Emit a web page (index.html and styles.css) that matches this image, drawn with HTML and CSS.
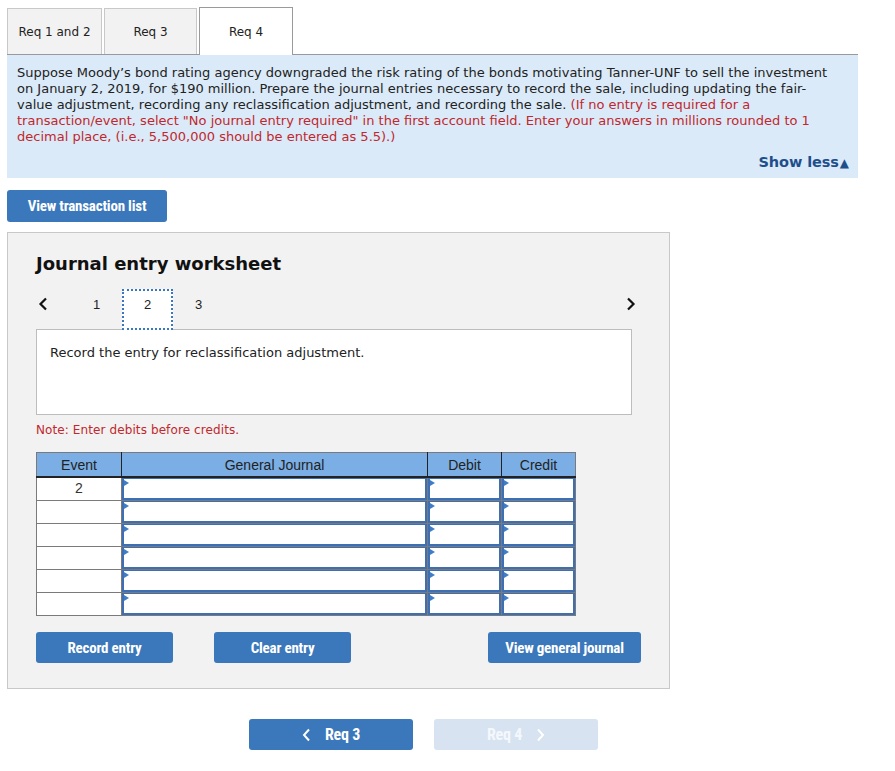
FILE: index.html
```html
<!DOCTYPE html>
<html lang="en">
<head>
<meta charset="utf-8">
<title>Journal entry worksheet</title>
<link rel="stylesheet" href="styles.css">
</head>
<body>
<div class="page">
  <div class="tabs">
    <div class="tab">Req 1 and 2</div>
    <div class="tab">Req 3</div>
    <div class="tab active">Req 4</div>
  </div>
  <div class="question">
    <p class="qtext">Suppose Moody’s bond rating agency downgraded the risk rating of the bonds motivating Tanner-UNF to sell the investment on January 2, 2019, for $190 million. Prepare the journal entries necessary to record the sale, including updating the fair-value adjustment, recording any reclassification adjustment, and recording the sale. <span class="red">(If no entry is required for a transaction/event, select "No journal entry required" in the first account field. Enter your answers in millions rounded to 1 decimal place, (i.e., 5,500,000 should be entered as 5.5).)</span></p>
    <div class="showless">Show less<span class="tri">▲</span></div>
  </div>

  <button class="btn btn-list">View transaction list</button>

  <div class="worksheet">
    <h2 class="ws-title">Journal entry worksheet</h2>
    <div class="pager">
      <span class="chev chev-left"><svg width="10" height="14" viewBox="0 0 10 14"><polyline points="8,1.5 2.5,7 8,12.5" fill="none" stroke="#111" stroke-width="2.2"/></svg></span>
      <span class="pg">1</span>
      <span class="pg current">2</span>
      <span class="pg">3</span>
      <span class="chev chev-right"><svg width="10" height="14" viewBox="0 0 10 14"><polyline points="2,1.5 7.5,7 2,12.5" fill="none" stroke="#111" stroke-width="2.2"/></svg></span>
    </div>
    <div class="prompt">Record the entry for reclassification adjustment.</div>
    <div class="note">Note: Enter debits before credits.</div>

    <table class="journal">
      <colgroup>
        <col class="c-event">
        <col class="c-gj">
        <col class="c-amt">
        <col class="c-amt">
      </colgroup>
      <thead>
        <tr>
          <th>Event</th>
          <th>General Journal</th>
          <th>Debit</th>
          <th>Credit</th>
        </tr>
      </thead>
      <tbody>
        <tr><td class="ev">2</td><td class="in"><div class="field"></div></td><td class="in"><div class="field"></div></td><td class="in"><div class="field"></div></td></tr>
        <tr><td class="ev"></td><td class="in"><div class="field"></div></td><td class="in"><div class="field"></div></td><td class="in"><div class="field"></div></td></tr>
        <tr><td class="ev"></td><td class="in"><div class="field"></div></td><td class="in"><div class="field"></div></td><td class="in"><div class="field"></div></td></tr>
        <tr><td class="ev"></td><td class="in"><div class="field"></div></td><td class="in"><div class="field"></div></td><td class="in"><div class="field"></div></td></tr>
        <tr><td class="ev"></td><td class="in"><div class="field"></div></td><td class="in"><div class="field"></div></td><td class="in"><div class="field"></div></td></tr>
        <tr><td class="ev"></td><td class="in"><div class="field"></div></td><td class="in"><div class="field"></div></td><td class="in"><div class="field"></div></td></tr>
      </tbody>
    </table>

    <div class="actions">
      <button class="btn btn-record">Record entry</button>
      <button class="btn btn-clear">Clear entry</button>
      <button class="btn btn-view">View general journal</button>
    </div>
  </div>

  <div class="bottom-nav">
    <button class="btn btn-nav"><svg width="9" height="14" viewBox="0 0 9 14"><polyline points="7,1.5 2,7 7,12.5" fill="none" stroke="#fff" stroke-width="2"/></svg><span>Req 3</span></button>
    <button class="btn btn-nav disabled"><span>Req 4</span><svg width="9" height="14" viewBox="0 0 9 14"><polyline points="2,1.5 7,7 2,12.5" fill="none" stroke="#fff" stroke-width="2"/></svg></button>
  </div>
</div>
</body>
</html>
```

FILE: styles.css
```css
html, body {
  margin: 0;
  padding: 0;
  background: #fff;
}
body {
  font-family: "DejaVu Sans", Verdana, sans-serif;
  color: #222;
}
.page {
  padding: 7px 0 0 7px;
  width: 851px;
}

/* tabs */
.tabs {
  display: flex;
  gap: 2px;
  border-bottom: 1px solid #9a9a9a;
  height: 47px;
}
.tab {
  width: 95px;
  height: 46px;
  box-sizing: border-box;
  border: 1px solid #c8c8c8;
  border-bottom: none;
  background: #f2f2f2;
  display: flex;
  align-items: center;
  justify-content: center;
  font-size: 12px;
  color: #222;
  margin-top: 1px;
}
.tab + .tab { width: 93px; }
.tab.active {
  width: 94px;
  background: #fff;
  border-color: #9a9a9a;
  height: 48px;
  margin-top: 0;
  margin-bottom: -1px;
}

/* question */
.question {
  background: #dbeaf8;
  padding: 10px 20px 6px 10px;
}
.qtext {
  margin: 0;
  font-size: 13px;
  line-height: 16px;
  color: #222;
}
.red { color: #c1272d; }
.showless {
  text-align: right;
  font-size: 14.5px;
  font-weight: bold;
  line-height: 18px;
  color: #1f4f8b;
  margin-top: 8px;
  margin-right: -11px;
  letter-spacing: -0.1px;
}
.tri {
  font-size: 12px;
  margin-left: 1px;
}

/* buttons */
.btn {
  border: none;
  border-radius: 3px;
  background: #3b77bb;
  color: #fff;
  font-family: "Liberation Sans Narrow", "Roboto Condensed", "Roboto", sans-serif;
  font-stretch: condensed;
  font-weight: bold;
  font-size: 15px;
  letter-spacing: -0.2px;
  height: 32px;
  padding: 0;
  cursor: pointer;
}
.btn-list {
  display: block;
  width: 160px;
  margin-top: 12px;
}

/* worksheet */
.worksheet {
  margin-top: 10px;
  width: 663px;
  box-sizing: border-box;
  background: #f2f2f2;
  border: 1px solid #c8c8c8;
  padding: 19px 28px 25px 28px;
}
.ws-title {
  margin: 0;
  font-size: 18px;
  line-height: 24px;
  font-weight: bold;
  color: #111;
}
.pager {
  margin-top: 13px;
  width: 596px;
  height: 41px;
  display: flex;
  align-items: stretch;
  font-family: "Liberation Sans", Arial, sans-serif;
  font-size: 13px;
  color: #222;
}
.chev {
  display: flex;
  align-items: flex-start;
  padding-top: 8px;
}
.chev-left {
  width: 35px;
  padding-left: 2px;
  box-sizing: border-box;
}
.chev-right {
  margin-left: auto;
  margin-right: -4px;
}
.pg {
  width: 51px;
  display: flex;
  justify-content: center;
  box-sizing: border-box;
  padding-top: 8px;
  line-height: 15px;
}
.pg.current {
  background: #fff;
  border: 2px dotted #3b76c0;
  padding-top: 6px;
  position: relative;
  z-index: 1;
}
.prompt {
  width: 596px;
  height: 86px;
  box-sizing: border-box;
  background: #fff;
  border: 1px solid #bdbdbd;
  padding: 15px 13px;
  margin-top: -1px;
  font-size: 13px;
  line-height: 16px;
  color: #222;
}
.note {
  margin-top: 7px;
  font-size: 12px;
  line-height: 16px;
  color: #c1272d;
  letter-spacing: 0.1px;
}

/* journal table */
.journal {
  margin-top: 14px;
  border-collapse: collapse;
  width: 540px;
  table-layout: fixed;
  font-family: "Liberation Sans", Arial, sans-serif;
  font-size: 14px;
  border: 1px solid #7a7a7a;
}
.c-event { width: 85px; }
.c-gj { width: 306px; }
.c-amt { width: 74px; }
.journal th {
  background: #7aaee4;
  color: #222;
  font-weight: normal;
  height: 23px;
  padding: 0;
  border-right: 1px solid #222;
  border-bottom: 2px solid #222;
  border-top: 1px solid #7a7a7a;
  text-align: center;
}
.journal th:last-child { border-right: 1px solid #7a7a7a; }
.journal td {
  height: 22px;
  padding: 0;
  border: 1px solid #7a7a7a;
  background: #fff;
}
.journal td.ev {
  text-align: center;
  vertical-align: top;
  line-height: 21px;
  color: #333;
}
.field {
  position: relative;
  height: 22px;
  box-sizing: border-box;
  border: 2px solid #3d6fb2;
  border-top-width: 1px;
}
.field::before {
  content: "";
  position: absolute;
  left: 0;
  top: 1px;
  border-left: 5px solid #3f7ec7;
  border-top: 3px solid transparent;
  border-bottom: 3px solid transparent;
}

/* actions */
.actions {
  margin-top: 16px;
  display: flex;
  width: 605px;
}
.btn-record, .btn-clear {
  width: 137px;
  height: 31px;
}
.btn-clear { margin-left: 41px; }
.btn-view {
  width: 153px;
  height: 31px;
  margin-left: auto;
}

/* bottom nav */
.bottom-nav {
  margin-top: 30px;
  padding-left: 242px;
  display: flex;
  gap: 21px;
}
.btn-nav {
  width: 164px;
  height: 31px;
  display: flex;
  align-items: center;
  justify-content: center;
  gap: 14px;
  font-size: 16px;
}
.btn-nav.disabled {
  background: #d7e3f1;
  color: #f4f8fc;
  cursor: default;
}
```
